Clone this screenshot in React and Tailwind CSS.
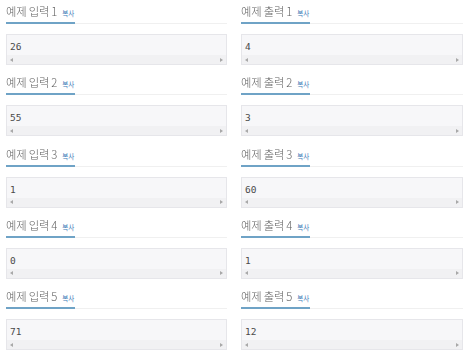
import React from "react";

const data = [
  ["26", "4"],
  ["55", "3"],
  ["1", "60"],
  ["0", "1"],
  ["71", "12"],
];

function Section({ title, value }) {
  return (
    <div className="flex flex-col">
      <div className="border-b border-[#f0f0f0] flex">
        <div className="flex items-baseline gap-[5px] border-b-2 border-[#6fa3c6] pb-[4px] pt-[5px] -mb-px pr-[1px]">
          <span className="text-[11.3px] leading-[14px] font-light text-[#606060] tracking-[-0.2px] opacity-[0.99] will-change-transform">{title}</span>
          <span className="text-[6.5px] leading-[8px] text-[#3a7ab8]">복사</span>
        </div>
      </div>
      <div className="mt-[10px] h-[31px] border border-[#e6e6ea] bg-[#f7f7f9] flex flex-col">
        <div className="pl-[3px] pt-[6px] h-[20px] font-['DejaVu_Sans_Mono',monospace] text-[9.5px] leading-[12px] text-[#4a4a4a]">
          {value}
        </div>
        <div className="flex-1 bg-[#f1f1f3] flex items-center justify-between px-[3px]">
          <span className="w-0 h-0 border-y-[2.5px] border-y-transparent border-r-[3px] border-r-[#a8a8a8]" />
          <span className="w-0 h-0 border-y-[2.5px] border-y-transparent border-l-[3px] border-l-[#a8a8a8]" />
        </div>
      </div>
    </div>
  );
}

export default function App() {
  return (
    <div className="w-[474px] h-[361px] bg-white overflow-hidden antialiased font-['Noto_Sans_CJK_KR','Noto_Sans',sans-serif]">
      <div className="flex flex-col gap-[5.25px] pl-[6px] pr-[11px] -mt-[1px]">
        {data.map((row, i) => (
          <div key={i} className="grid grid-cols-[221px_222px] gap-[14px]">
            <Section title={`예제 입력 ${i + 1}`} value={row[0]} />
            <Section title={`예제 출력 ${i + 1}`} value={row[1]} />
          </div>
        ))}
      </div>
    </div>
  );
}
